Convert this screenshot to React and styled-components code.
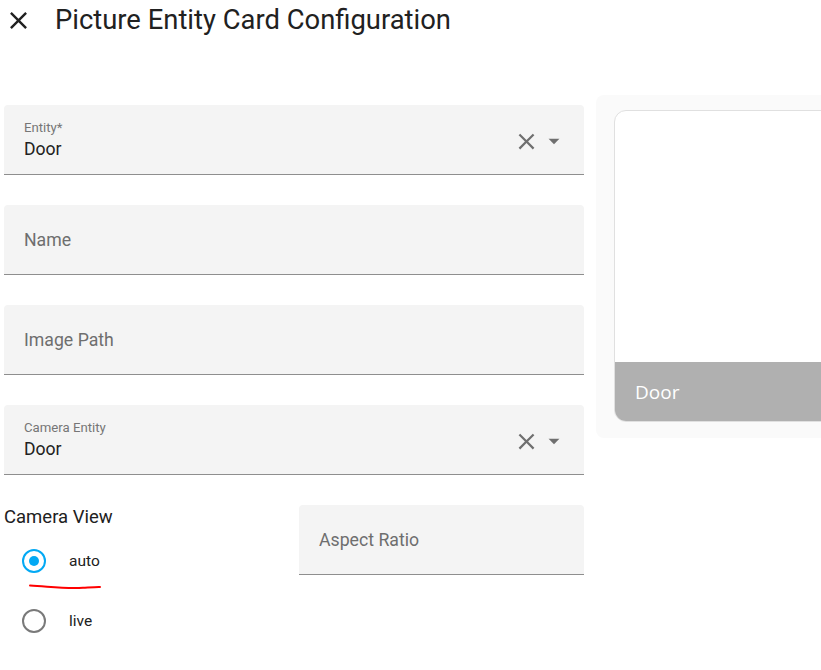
import React from "react";
import styled, { createGlobalStyle } from "styled-components";

const Global = createGlobalStyle`
  html, body { margin: 0; padding: 0; background: #ffffff; overflow: hidden; }
  body { font-family: Roboto, "Noto Sans", sans-serif; color: #212121; }
  * { box-sizing: border-box; }
`;

const Page = styled.div`
  width: 821px;
  height: 670px;
  overflow: hidden;
`;

const Header = styled.header`
  display: flex;
  align-items: center;
  height: 40px;
  padding-left: 4px;
`;

const IconButton = styled.div`
  width: 29px;
  height: 29px;
  display: flex;
  align-items: center;
  justify-content: center;
  color: #212121;
`;

const Title = styled.h1`
  margin: 0 0 0 22px;
  font-size: 27.4px;
  font-weight: 400;
  line-height: 32px;
  color: #212121;
`;

const Content = styled.div`
  display: flex;
  gap: 12px;
  margin-top: 55px;
  padding-left: 4px;
`;

const Form = styled.div`
  width: 580px;
  flex: none;
  padding-top: 10px;
  display: flex;
  flex-direction: column;
  gap: 30px;
`;

const Field = styled.div`
  height: 70px;
  background: #f4f4f4;
  border-radius: 4px 4px 0 0;
  border-bottom: 1px solid #8e8e8e;
  display: flex;
  align-items: ${(p) => (p.$filled ? "flex-start" : "center")};
  padding: ${(p) => (p.$filled ? "15px 17px 0 20px" : "1px 17px 0 20px")};
`;

const FieldText = styled.div`
  flex: 1;
  display: flex;
  flex-direction: column;
  gap: 3px;
`;

const FloatLabel = styled.div`
  font-size: 13.2px;
  line-height: 15px;
  color: #767676;
`;

const Value = styled.div`
  font-size: 17.6px;
  line-height: 22px;
  color: #212121;
`;

const Placeholder = styled.div`
  font-size: 17.7px;
  line-height: 22px;
  color: #6e6e6e;
`;

const Actions = styled.div`
  display: flex;
  align-items: center;
  align-self: center;
  margin-top: -12px;
  gap: 1px;
  color: #6f6f6f;
`;

const Bottom = styled.div`
  display: grid;
  grid-template-columns: 295px 285px;
`;

const RadioGroup = styled.div`
  display: flex;
  flex-direction: column;
`;

const GroupLabel = styled.div`
  font-size: 18.5px;
  line-height: 24px;
  color: #212121;
  height: 26px;
`;

const RadioRow = styled.label`
  position: relative;
  display: flex;
  align-items: center;
  height: 60px;
  padding-left: 18px;
`;

const RadioCircle = styled.span`
  width: 24px;
  height: 24px;
  border-radius: 50%;
  border: 2px solid ${(p) => (p.$checked ? "#03a9f4" : "#7a7a7a")};
  display: flex;
  align-items: center;
  justify-content: center;
  &::after {
    content: "";
    width: 10px;
    height: 10px;
    border-radius: 50%;
    background: ${(p) => (p.$checked ? "#03a9f4" : "transparent")};
  }
`;

const RadioText = styled.span`
  margin-left: 23px;
  font-size: 15.5px;
  color: #212121;
`;

const Scribble = styled.svg`
  position: absolute;
  left: 25px;
  top: 52px;
`;

const Preview = styled.div`
  width: 320px;
  height: 343px;
  flex: none;
  background: #fafafa;
  border-radius: 8px;
  padding: 15px 0 16px 18px;
`;

const Card = styled.div`
  height: 312px;
  background: #ffffff;
  border: 1px solid #e0e0e0;
  border-radius: 12px;
  overflow: hidden;
  display: flex;
  flex-direction: column;
  justify-content: flex-end;
`;

const CardFooter = styled.div`
  height: 59px;
  background: #b0b0b0;
  display: flex;
  align-items: center;
  padding-left: 20px;
  font-family: "Open Sans", "Noto Sans", sans-serif;
  font-size: 19px;
  color: #ffffff;
`;

const CloseIcon = ({ size = 24 }) => (
  <svg width={size} height={size} viewBox="0 0 24 24" fill="currentColor">
    <path d="M19,6.41L17.59,5L12,10.59L6.41,5L5,6.41L10.59,12L5,17.59L6.41,19L12,13.41L17.59,19L19,17.59L13.41,12L19,6.41Z" />
  </svg>
);

const MenuDown = ({ size = 24 }) => (
  <svg width={size} height={size} viewBox="0 0 24 24" fill="currentColor">
    <path d="M7,10L12,15L17,10H7Z" />
  </svg>
);

const PickerField = ({ label, value }) => (
  <Field $filled>
    <FieldText>
      <FloatLabel>{label}</FloatLabel>
      <Value>{value}</Value>
    </FieldText>
    <Actions>
      <CloseIcon size={27} />
      <MenuDown size={26} />
    </Actions>
  </Field>
);

const TextField = ({ label }) => (
  <Field>
    <Placeholder>{label}</Placeholder>
  </Field>
);

export default function App() {
  return (
    <Page>
      <Global />
      <Header>
        <IconButton>
          <CloseIcon size={29} />
        </IconButton>
        <Title>Picture Entity Card Configuration</Title>
      </Header>
      <Content>
        <Form>
          <PickerField label="Entity*" value="Door" />
          <TextField label="Name" />
          <TextField label="Image Path" />
          <PickerField label="Camera Entity" value="Door" />
          <Bottom>
            <RadioGroup>
              <GroupLabel>Camera View</GroupLabel>
              <RadioRow>
                <RadioCircle $checked />
                <RadioText>auto</RadioText>
                <Scribble width="74" height="10" viewBox="0 0 74 10">
                  <path d="M1,2.5 C20,3.5 36,6 54,4.8 C62,4.3 68,3.8 71,4" stroke="#ff0000" strokeWidth="2" fill="none" strokeLinecap="round" />
                </Scribble>
              </RadioRow>
              <RadioRow>
                <RadioCircle />
                <RadioText>live</RadioText>
              </RadioRow>
            </RadioGroup>
            <TextField label="Aspect Ratio" />
          </Bottom>
        </Form>
        <Preview>
          <Card>
            <CardFooter>Door</CardFooter>
          </Card>
        </Preview>
      </Content>
    </Page>
  );
}
